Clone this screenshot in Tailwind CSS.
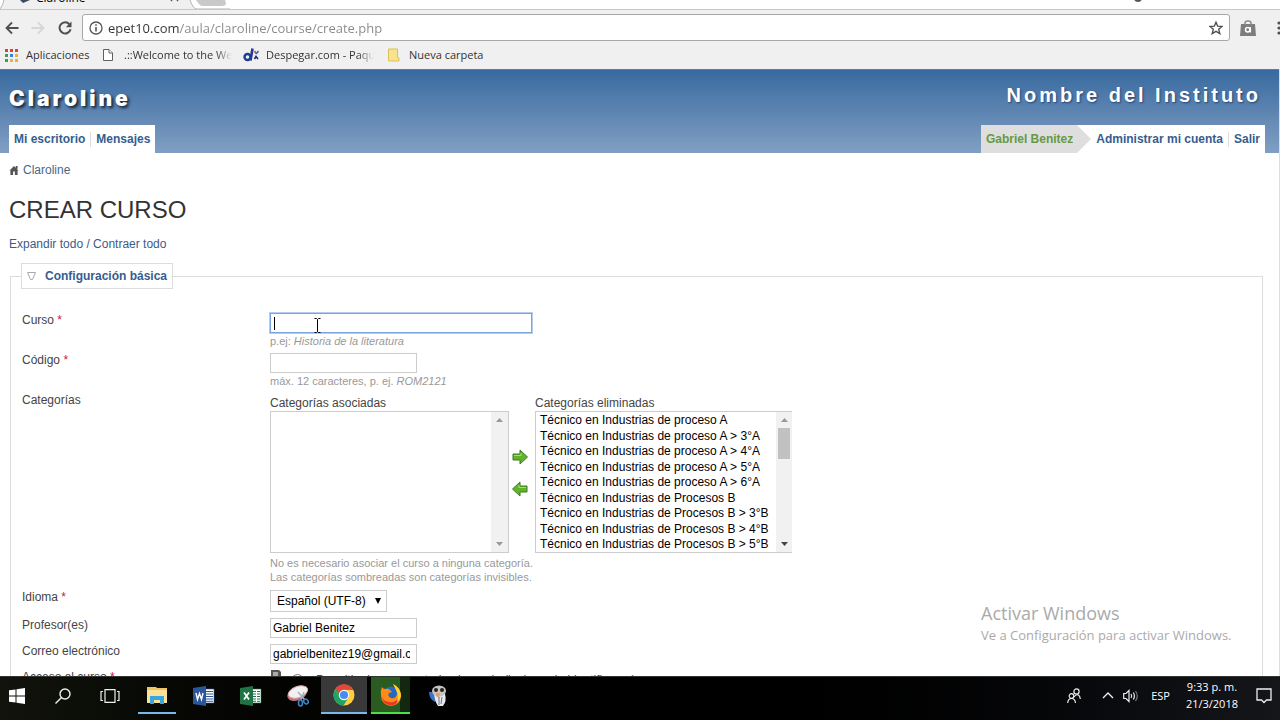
<!DOCTYPE html>
<html lang="es">
<head>
    <meta charset="UTF-8">
    <meta name="viewport" content="width=device-width, initial-scale=1.0">
    <title>Claroline - Crear curso</title>
    <script src="https://cdn.jsdelivr.net/npm/@tailwindcss/browser@4"></script>
</head>
<body class="h-screen flex flex-col overflow-hidden bg-white font-['Liberation_Sans',Arial,sans-serif] text-[12px] leading-[15px] text-[#444]">

    <!-- Browser chrome -->
    <header class="shrink-0 bg-[#f1f0f0] font-['Open_Sans',sans-serif] text-[#333]">
        <!-- Tab strip -->
        <div class="relative h-[10px] bg-white border-b border-[#c8c8c8] overflow-hidden">
            <svg class="absolute left-0 top-0" width="230" height="10" viewBox="0 0 230 10">
                <path d="M196 0H225L226 3Q226 6 222 6H203Q200 6 199 4Z" fill="#c9c9c9"/>
                <path d="M0 10V9Q3 5 4 0H190Q193 9 197 10Z" fill="#f1f0f0"/>
                <path d="M0 9Q3 5 4 0M190 0Q193 9 197 9H230" fill="none" stroke="#b5b5b5"/>
                <path d="M20 0L23 3L30 0Z" fill="#3c4a66"/>
                <path d="M171 0L172 1M177 0L178 1" stroke="#555" stroke-width="1.5"/>
            </svg>
            <span class="absolute left-[36px] bottom-[3px] text-[12px] leading-[16px] text-black">Claroline</span>
            <span class="absolute left-[1134px] -top-[6px] size-2 rounded-full bg-[#555]"></span>
        </div>

        <!-- Address bar -->
        <div class="flex items-center h-[35px]">
            <button aria-label="Atrás" class="w-[23px] flex justify-center">
                <svg width="14" height="14" viewBox="0 0 14 14" fill="none" stroke="#505050" stroke-width="1.8"><path d="M13.500 7H2M7 1.500L1.500 7L7 12.500"/></svg>
            </button>
            <button aria-label="Adelante" class="w-[30px] flex justify-center">
                <svg width="14" height="14" viewBox="0 0 14 14" fill="none" stroke="#d6d6d6" stroke-width="1.800"><path d="M0.500 7H12M7 1.500L12.500 7L7 12.500"/></svg>
            </button>
            <button aria-label="Recargar" class="w-[24px] flex justify-center">
                <svg width="14" height="14" viewBox="0 0 14 14"><path d="M11.500 3.300A5.600 5.600 0 1 0 12.600 8.300" fill="none" stroke="#505050" stroke-width="2"/><path d="M13.500 0.500V6.200H7.800Z" fill="#505050"/></svg>
            </button>
            <div class="flex-1 flex items-center h-[27px] ml-[5px] px-[6px] bg-white border border-[#a8a8a8] rounded-[3px]">
                <svg width="14" height="14" viewBox="0 0 14 14" fill="none" stroke="#555" stroke-width="1.300"><circle cx="7" cy="7" r="6"/><path d="M7 6V10.500M7 3.300V4.800" stroke-width="1.600"/></svg>
                <input type="text" aria-label="Dirección" value="epet10.com/aula/claroline/course/create.php" class="flex-1 ml-[5px] text-[13px] leading-[18px] bg-linear-to-r from-[#333] from-[72px] to-[#888] to-[72px] bg-clip-text text-transparent">
                <button aria-label="Añadir a favoritos">
                    <svg width="14" height="14" viewBox="0 0 14 14" fill="none" stroke="#505050" stroke-width="1.400"><path d="M7 1.200L8.700 5.200L13 5.500L9.700 8.300L10.800 12.600L7 10.300L3.200 12.600L4.300 8.300L1 5.500L5.300 5.200Z"/></svg>
                </button>
            </div>
            <button aria-label="Extensión" class="ml-[10px]">
                <svg width="16" height="16" viewBox="0 0 16 16"><path d="M1 4H15L16 16H0Z" fill="#7d7d7d"/><path d="M5 5V3Q5 1 8 1T11 3V5" fill="none" stroke="#8a8a8a" stroke-width="1.500"/><circle cx="7.700" cy="9.700" r="2.200" fill="none" stroke="#fff" stroke-width="1.500"/><path d="M10.400 7V12.500" stroke="#fff" stroke-width="1.300"/></svg>
            </button>
            <button aria-label="Menú" class="ml-5 w-[4px] overflow-hidden">
                <svg class="max-w-none" width="6" height="14" viewBox="0 0 6 14" fill="#505050"><circle cx="3" cy="2" r="1.600"/><circle cx="3" cy="7" r="1.600"/><circle cx="3" cy="12" r="1.600"/></svg>
            </button>
        </div>

        <!-- Bookmarks -->
        <nav class="flex items-center h-[24px] pb-[4px] pl-1 text-[11px] leading-[16px] text-[#333]">
            <a href="#" class="flex items-center gap-2 w-[98px]">
                <svg width="14" height="14" viewBox="0 0 14 14"><path d="M1 1h3v3h-3z M6 1h3v3h-3z M11 1h3v3h-3z" fill="#d8433a"/><path d="M1 6h3v3h-3z" fill="#3f9c50"/><path d="M6 6h3v3h-3z" fill="#3f7de0"/><path d="M11 6h3v3h-3z" fill="#e8b23a"/><path d="M1 11h3v3h-3z" fill="#3f9c50"/><path d="M6 11h8v3h-8z" fill="#e8b23a"/><path d="M9 11h2v3h-2z" fill="#f1f0f0"/></svg>
                Aplicaciones
            </a>
            <a href="#" class="flex items-center gap-[10px] w-[141px]">
                <svg class="shrink-0" width="12" height="14" viewBox="0 0 12 14" fill="#fff" stroke="#606060"><path d="M1.500 1.500H7L10.500 5V12.500H1.500Z"/><path d="M7 1.500V5H10.500"/></svg>
                <span class="w-[108px] overflow-hidden whitespace-nowrap [mask-image:linear-gradient(to_right,black_85%,transparent)]">.::Welcome to the Web</span>
            </a>
            <a href="#" class="flex items-center gap-[7px] w-[144px]">
                <svg class="shrink-0" width="16" height="14" viewBox="0 0 16 14" fill="none" stroke="#1d3c94"><path d="M9.500 0.500L7.500 12.500" stroke-width="2.600"/><ellipse cx="4.500" cy="9" rx="3" ry="3" stroke-width="2.400"/><path d="M11.500 3L13 5.500" stroke="#c44d6c" stroke-width="1.600"/><path d="M15.500 3L13 6" stroke="#4263a8" stroke-width="1.600"/><path d="M11.500 11L13 8.500L15 11" stroke="#1d2c74" stroke-width="1.600"/></svg>
                <span class="w-[108px] overflow-hidden whitespace-nowrap [mask-image:linear-gradient(to_right,black_85%,transparent)]">Despegar.com - Paquetes</span>
            </a>
            <a href="#" class="flex items-center gap-[9px]">
                <svg width="13" height="14" viewBox="0 0 13 14"><path d="M1.500 1H10.500V9.500L12 10V13H1.500Z" fill="#fae38d" stroke="#dfbf57"/></svg>
                Nueva carpeta
            </a>
        </nav>
    </header>

    <!-- Claroline page -->
    <div class="flex-1 min-h-0 overflow-hidden border-r border-[#ddd]">
        <div class="h-[84px] flex flex-col justify-between pl-[9px] pr-[14px] border-t border-[#5a7ba6] bg-linear-to-b from-[#386a9f] to-[#819fc3]">
            <div class="flex justify-between pt-[14px]">
                <a href="#" class="pt-[4px] font-['Inter',sans-serif] font-black text-[21px] leading-[22px] tracking-[3px] text-white [text-shadow:2px_2px_3px_#123]">Claroline</a>
                <a href="#" class="pr-1 font-bold text-[20px] leading-[22px] tracking-[3px] text-white [text-shadow:1px_1px_2px_#247]">Nombre del Instituto</a>
            </div>
            <div class="flex justify-between h-[28px] text-[12px] font-bold text-[#365d8f]">
                <nav class="flex items-center bg-white px-[5px]">
                    <a href="#" class="pr-[5px] border-r border-[#ddd]">Mi escritorio</a>
                    <a href="#" class="pl-[5px]">Mensajes</a>
                </nav>
                <nav class="flex items-center bg-white pr-[5px]">
                    <span class="flex items-center h-full pl-[5px] bg-[#dedede] text-[#669944]">Gabriel Benitez</span>
                    <svg width="18" height="28" viewBox="0 0 18 28" fill="#dedede"><path d="M0 0H4L18 14L4 28H0Z"/></svg>
                    <a href="#" class="pl-[5px] pr-[5px] border-r border-[#ddd]">Administrar mi cuenta</a>
                    <a href="#" class="pl-[5px]">Salir</a>
                </nav>
            </div>
        </div>

        <main class="pl-[9px] pr-4">
            <nav class="flex items-center gap-1 pt-[10px] text-[#4a6688]">
                <svg width="10" height="9" viewBox="0 0 10 10" fill="#555"><path d="M5 0L10 5H9V10H6V6H4V10H1V5H0Z M7 0H9V3H7Z"/></svg>
                <a href="#">Claroline</a>
            </nav>
            <h1 class="mt-[17px] text-[24px] leading-[30px] text-[#333]">CREAR CURSO</h1>
            <p class="mt-[12px] text-[#3b5c8a]"><a href="#">Expandir todo</a> / <a href="#">Contraer todo</a></p>

            <form>
                <fieldset class="mt-[11px] ml-px pl-[10px] pb-10 border border-[#ddd]">
                    <legend class="flex items-center h-[26px] px-[5px] border border-[#ddd] bg-white text-[12px] font-bold text-[#365d8f]">
                        <svg class="mr-[9px]" width="9" height="8" viewBox="0 0 9 8" fill="none" stroke="#aaa"><path d="M0.500 0.500H8.500L5.500 7.500H3.500Z"/></svg>
                        <a href="#">Configuración básica</a>
                    </legend>

                    <div class="grid grid-cols-[248px_1fr] pt-[24px] pl-px">
                        <label for="curso">Curso <span class="text-[#d2143c]">*</span></label>
                        <div class="relative h-10">
                            <input id="curso" type="text" class="block w-[262px] h-[20px] px-[3px] border border-[#7ba3e0] outline outline-[#b5ccf0] text-black">
                            <span class="absolute left-[4px] top-[4px] w-px h-[13px] bg-black"></span>
                            <svg class="absolute left-[44px] top-[5px]" width="7" height="15" viewBox="0 0 7 15" fill="none" stroke="#000"><path d="M0.500 0.500H2.500L3.500 1.500L4.500 0.500H6.500M3.500 1.500V13.500M0.500 14.500H2.500L3.500 13.500L4.500 14.500H6.500"/></svg>
                            <p class="pt-px text-[11px] leading-[14px] text-[#999]">p.ej: <i>Historia de la literatura</i></p>
                        </div>

                        <label for="codigo">Código <span class="text-[#d2143c]">*</span></label>
                        <div class="h-10">
                            <input id="codigo" type="text" class="block w-[147px] h-[20px] px-[3px] border border-[#ccc] text-black">
                            <p class="pt-px text-[11px] leading-[14px] text-[#999]">máx. 12 caracteres, p. ej. <i>ROM2121</i></p>
                        </div>

                        <span>Categorías</span>
                        <div class="pt-[3px] pb-[6px]">
                            <div class="flex">
                                <div>
                                    <label for="asociadas" class="block">Categorías asociadas</label>
                                    <div class="flex w-[239px] h-[142px] border border-[#ccc]">
                                        <select id="asociadas" multiple class="flex-1 overflow-hidden"></select>
                                        <div class="w-[17px] flex flex-col justify-between items-center py-[6px] bg-[#f1f1f1]">
                                            <svg width="7" height="4" viewBox="0 0 7 4" fill="#999"><path d="M0 4L3.500 0L7 4Z"/></svg>
                                            <svg width="7" height="4" viewBox="0 0 7 4" fill="#999"><path d="M0 0L3.500 4L7 0Z"/></svg>
                                        </div>
                                    </div>
                                </div>
                                <div class="w-[26px] flex flex-col items-center gap-4 pt-[53px] pr-[4px]">
                                    <button type="button" aria-label="Quitar categoría">
                                        <svg width="16" height="16" viewBox="0 0 16 16"><path d="M1 5H8V1L15.500 8L8 15V11H1Z" fill="#62b32e" stroke="#3d7d1c"/><path d="M2 6.500H9V4" fill="none" stroke="#a5dc78"/></svg>
                                    </button>
                                    <button type="button" aria-label="Asociar categoría">
                                        <svg width="16" height="16" viewBox="0 0 16 16"><path d="M15 5H8V1L0.500 8L8 15V11H15Z" fill="#62b32e" stroke="#3d7d1c"/><path d="M14 6.500H7V4" fill="none" stroke="#a5dc78"/></svg>
                                    </button>
                                </div>
                                <div>
                                    <label for="eliminadas" class="block">Categorías eliminadas</label>
                                    <div class="flex w-[257px] h-[142px] border border-r-0 border-[#ccc]">
                                        <select id="eliminadas" multiple size="9" class="flex-1 pt-px overflow-hidden text-[12px] text-black *:px-1 *:py-0 *:leading-[15px] *:min-h-0 *:odd:h-[16px] *:even:h-[15px]">
                                            <option>Técnico en Industrias de proceso A</option>
                                            <option>Técnico en Industrias de proceso A &gt; 3°A</option>
                                            <option>Técnico en Industrias de proceso A &gt; 4°A</option>
                                            <option>Técnico en Industrias de proceso A &gt; 5°A</option>
                                            <option>Técnico en Industrias de proceso A &gt; 6°A</option>
                                            <option>Técnico en Industrias de Procesos B</option>
                                            <option>Técnico en Industrias de Procesos B &gt; 3°B</option>
                                            <option>Técnico en Industrias de Procesos B &gt; 4°B</option>
                                            <option>Técnico en Industrias de Procesos B &gt; 5°B</option>
                                        </select>
                                        <div class="w-[16px] flex flex-col items-center py-[6px] bg-[#f1f1f1]">
                                            <svg width="7" height="4" viewBox="0 0 7 4" fill="#999"><path d="M0 4L3.500 0L7 4Z"/></svg>
                                            <span class="mt-[6px] mb-auto w-[12px] h-[31px] bg-[#c1c1c1]"></span>
                                            <svg width="7" height="4" viewBox="0 0 7 4" fill="#444"><path d="M0 0L3.500 4L7 0Z"/></svg>
                                        </div>
                                    </div>
                                </div>
                            </div>
                            <p class="mt-[3px] text-[11px] leading-[14px] text-[#999]">No es necesario asociar el curso a ninguna categoría.<br>Las categorías sombreadas son categorías invisibles.</p>
                        </div>

                        <label for="idioma">Idioma <span class="text-[#d2143c]">*</span></label>
                        <div class="relative w-[117px] h-[28px]">
                            <select id="idioma" class="block w-full h-[22px] pl-[6px] border border-[#ccc] bg-white appearance-none text-black">
                                <option>Español (UTF-8)</option>
                            </select>
                            <svg class="absolute right-[6px] top-[8px]" width="6" height="6" viewBox="0 0 7 7"><path d="M0 0H7L3.500 7Z"/></svg>
                        </div>

                        <label for="profesor">Profesor(es)</label>
                        <div class="h-[26px]">
                            <input id="profesor" type="text" value="Gabriel Benitez" class="block w-[147px] h-[20px] px-[2px] border border-[#ccc] text-black">
                        </div>

                        <label for="correo">Correo electrónico</label>
                        <div class="h-[26px]">
                            <input id="correo" type="text" value="gabrielbenitez19@gmail.com" class="block w-[147px] h-[20px] pl-[2px] pr-[6px] border border-[#ccc] text-black">
                        </div>

                        <span>Acceso al curso <span class="text-[#d2143c]">*</span></span>
                        <div class="flex items-start">
                            <svg width="12" height="12" viewBox="0 0 12 12"><path d="M1 0H9L11 2V12H1Z" fill="#555"/><path d="M3 2H8V12H3Z" fill="#aaa"/></svg>
                            <input id="publico" name="acceso" type="radio" class="mt-1 ml-[9px]">
                            <label for="publico" class="ml-3 mt-[3px]">Permitir el acceso a todo el mundo (incluso sin identificarse)</label>
                        </div>
                    </div>
                </fieldset>
            </form>
        </main>
    </div>

    <!-- Windows activation watermark -->
    <div class="absolute right-[36px] bottom-[75px] w-[263px] font-['Open_Sans',sans-serif] text-[#aaa]">
        <p class="text-[18px] leading-[24px]">Activar Windows</p>
        <p class="text-[13px] leading-[20px]">Ve a Configuración para activar Windows.</p>
    </div>

    <!-- Taskbar -->
    <footer class="shrink-0 h-[44px] pb-[6px] flex border-t border-[#333] bg-black bg-linear-to-r from-[#11130c] via-black to-[#14161a] font-['Open_Sans',sans-serif] text-white">
        <button aria-label="Inicio" class="w-[39px] pl-[9px]">
            <svg width="16" height="16" viewBox="0 0 16 16" fill="#fff"><path d="M0 2.300L6.500 1.400V7.500H0Z M7.500 1.200L16 0V7.500H7.500Z M0 8.500H6.500V14.600L0 13.700Z M7.500 8.500H16V16L7.500 14.800Z"/></svg>
        </button>
        <button aria-label="Buscar" class="w-[47px] flex justify-center items-center">
            <svg width="16" height="16" viewBox="0 0 16 16" fill="none" stroke="#eee" stroke-width="1.400"><circle cx="10" cy="6" r="5"/><path d="M6.500 9.500L0.500 15.500"/></svg>
        </button>
        <button aria-label="Vista de tareas" class="w-[47px] flex justify-center items-center">
            <svg width="20" height="14" viewBox="0 0 20 14" fill="none" stroke="#eee" stroke-width="1.200"><path d="M5 0.700H15V13.300H5Z M3 2.500H1V11.500H3 M17 2.500H19V11.500H17"/></svg>
        </button>
        <button aria-label="Explorador de archivos" class="w-[47px] flex justify-center">
            <span class="w-[38px] h-full flex justify-center items-center border-b-2 border-[#76b9ed]">
                <svg width="20" height="18" viewBox="0 0 20 18"><path d="M0 1H9L10 2H20V17H0Z" fill="#f0c75e"/><path d="M0 4H20V17H0Z" fill="#fbe29a"/><path d="M3 18V10H17V18H13V14H7V18Z" fill="#3aa6dc"/></svg>
            </span>
        </button>
        <button aria-label="Word" class="w-[47px] flex justify-center items-center">
            <svg width="22" height="20" viewBox="0 0 22 20"><path d="M11 3H21V17H11Z" fill="#fff" stroke="#2b579a" stroke-width="0.600"/><path d="M13 5.500H20M13 8H20M13 10.500H20M13 13H20M13 15.300H20" stroke="#2b579a"/><path d="M0 2L13 0V20L0 18Z" fill="#2b579a"/><path d="M3 7L4.500 13.500L6.500 7.500L8.500 13.500L10 7" fill="none" stroke="#fff" stroke-width="1.400"/></svg>
        </button>
        <button aria-label="Excel" class="w-[47px] flex justify-center items-center">
            <svg width="22" height="20" viewBox="0 0 22 20"><path d="M11 3H21V17H11Z" fill="#fff" stroke="#217346" stroke-width="0.600"/><path d="M13 5.500H20M13 8H20M13 10.500H20M13 13H20M13 15.300H20" stroke="#217346" stroke-dasharray="3 1"/><path d="M0 2L13 0V20L0 18Z" fill="#217346"/><path d="M4 6.500L9 13.500M9 6.500L4 13.500" stroke="#fff" stroke-width="1.700"/></svg>
        </button>
        <button aria-label="Recortes" class="w-[47px] flex justify-center items-center">
            <svg width="24" height="22" viewBox="0 0 24 22" fill="none"><ellipse cx="11" cy="9" rx="10" ry="6.500" transform="rotate(-20 11 9)" fill="#bd7377"/><ellipse cx="12" cy="7" rx="10" ry="5.500" transform="rotate(-20 12 7)" fill="#f3f0f1" stroke="#d9aeb0"/><path d="M12 7L19 15M18 7L15 15" stroke="#9eb4c4" stroke-width="1.500"/><ellipse cx="14.500" cy="18" rx="2" ry="3" stroke="#3c86c4" stroke-width="1.600"/><ellipse cx="20" cy="16.500" rx="2" ry="2.600" transform="rotate(-40 20 16.500)" stroke="#3c86c4" stroke-width="1.600"/></svg>
        </button>
        <button aria-label="Chrome" class="w-[46px] flex justify-center items-center bg-[#393939] border-b-2 border-[#76b9ed]">
            <svg width="22" height="22" viewBox="0 0 22 22"><circle cx="11" cy="11" r="10.500" fill="#ffcd40"/><path d="M11 11L1.900 5.700A10.500 10.500 0 0 1 20.100 5.800H11Z" fill="#e0483b"/><path d="M1.900 5.700A10.500 10.500 0 0 0 10.500 21.500L15.500 13.600L11 11L6.500 13.600Z" fill="#1da362"/><path d="M1.900 5.700L6.500 13.600L11 11V5.800H2Z" fill="#1da362"/><path d="M1.900 5.700A10.500 10.500 0 0 1 20.100 5.800H11A5.200 5.200 0 0 0 6.200 9.500L3 5Z" fill="#e0483b"/><circle cx="11" cy="11" r="5.200" fill="#fff"/><circle cx="11" cy="11" r="4.100" fill="#4a8af4"/></svg>
        </button>
        <button aria-label="Firefox" class="w-[39px] ml-1 flex justify-center items-center bg-linear-to-r from-[#2a5c22] from-75% to-[#12290f] to-75% border-b-2 border-[#4be04b]">
            <svg width="22" height="22" viewBox="0 0 22 22"><circle cx="11" cy="11.500" r="9" fill="#2468c4"/><path d="M2 3Q3 5 5 5Q8 4 10 6L12 8L9 9Q7 12 11 14Q16 15 17 10Q17 5 13 0Q21 4 21 12A10 10 0 0 1 1 12Q0 7 2 3Z" fill="#ff8a16"/><path d="M1 10Q2 17 9 18Q15 19 19 14Q17 22 10 21.500Q2 20 1 10Z" fill="#e8382c"/><path d="M13 0Q21 4 21 12Q20 16 17 18Q19 11 16 6Z" fill="#ffd23a"/></svg>
        </button>
        <button aria-label="Mascota" class="w-[47px] ml-1 flex justify-center items-center">
            <svg width="20" height="22" viewBox="0 0 20 22"><path d="M1 7Q5 5 10 14L7 17Q1 14 1 7Z" fill="#3973c8"/><path d="M6 9H17Q19 16 15 21H10Q7 17 6 9Z" fill="#e6eaf5"/><ellipse cx="11" cy="6" rx="7" ry="5.500" fill="#c9c5bd"/><circle cx="8" cy="5" r="2" fill="#222"/><circle cx="14" cy="5" r="2" fill="#222"/><path d="M8 8L12 8L11 13L8 11Z" fill="#dfa06c"/><path d="M11 12V20M14 12L13 19" stroke="#555" stroke-width="0.800"/></svg>
        </button>

        <div class="ml-auto flex items-center text-[11px]">
            <svg width="14" height="16" viewBox="0 0 14 16" fill="none" stroke="#eee" stroke-width="1.200"><circle cx="9.500" cy="3.500" r="2.600"/><path d="M7 9Q9 6 11.500 7Q13 8 13.300 11"/><circle cx="4.500" cy="8" r="2.300"/><path d="M0.700 15Q1 10.500 4.500 10.500T8.500 15"/></svg>
            <svg class="ml-[21px]" width="12" height="7" viewBox="0 0 12 7" fill="none" stroke="#eee" stroke-width="1.400"><path d="M1 6L6 1L11 6"/></svg>
            <svg class="ml-[9px]" width="16" height="14" viewBox="0 0 16 14" fill="none" stroke="#eee" stroke-width="1.200"><path d="M0.700 4.500H3L6 1.500V12.500L3 9.500H0.700Z M8 5Q9.500 7 8 9M10.300 3.500Q12.500 7 10.300 10.500"/><path d="M12.500 2Q16 7 12.500 12" stroke="#777"/></svg>
            <span class="ml-3">ESP</span>
            <div class="ml-4 -mt-[2px] text-center leading-[17px]">9:33 p. m.<br>21/3/2018</div>
            <button aria-label="Notificaciones" class="ml-[18px] mr-2">
                <svg width="16" height="16" viewBox="0 0 16 16" fill="none" stroke="#eee" stroke-width="1.300"><path d="M1 1H15V12H10.500L8 14.500L5.500 12H1Z"/></svg>
            </button>
        </div>
    </footer>
</body>
</html>
